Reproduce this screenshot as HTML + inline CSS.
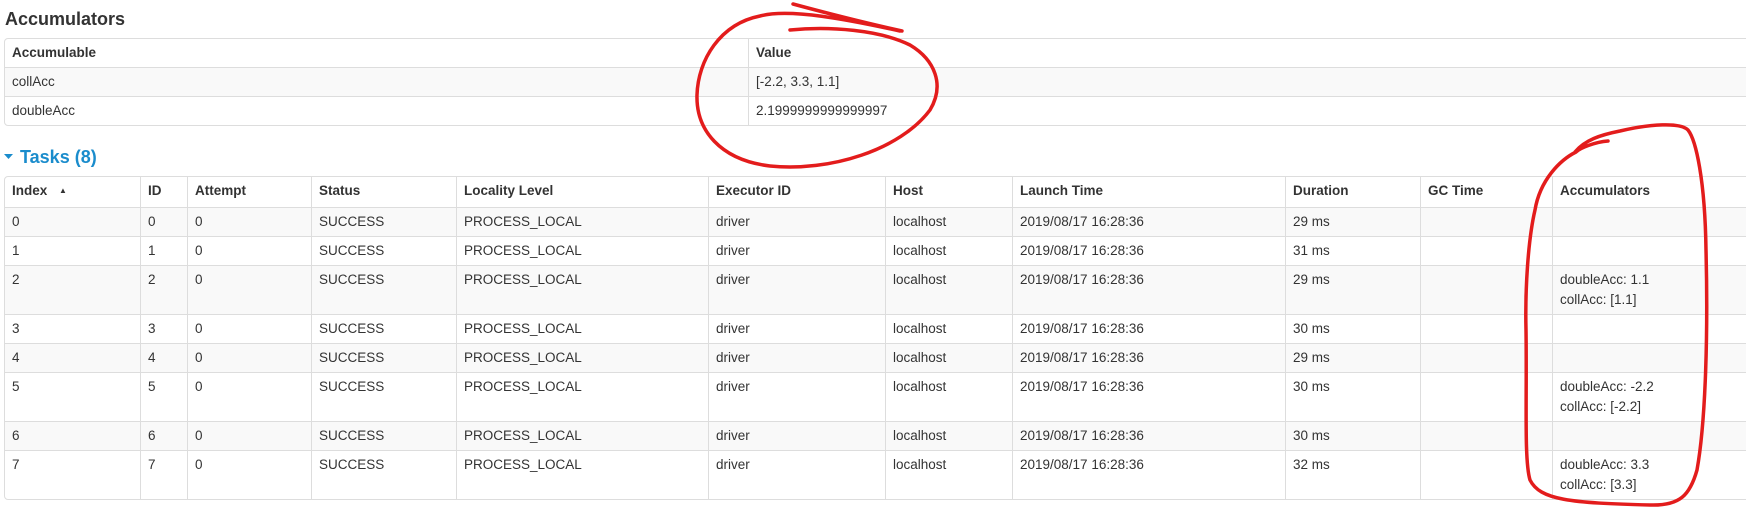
<!DOCTYPE html>
<html><head><meta charset="utf-8"><style>
body{margin:0;width:1746px;height:512px;overflow:hidden;background:#fff;font-family:"Liberation Sans",Arial,sans-serif;color:#333;position:relative}
h4{position:absolute;margin:0;font-size:18px;font-weight:bold;line-height:22px}
table{position:absolute;border-collapse:separate;border-spacing:0;table-layout:fixed;font-size:13.5px;border:1px solid #ddd;border-radius:4px}
td,th{padding:4px 7px 4px 7px;line-height:20px;text-align:left;vertical-align:top;border-left:1px solid #ddd;border-top:1px solid #ddd;white-space:nowrap;overflow:hidden}
th{font-weight:bold;border-top:none}
td:first-child,th:first-child{border-left:none}
tr.g td{background:#f9f9f9}
</style></head><body>
<h4 style="left:5px;top:8px;color:#333">Accumulators</h4>
<table style="left:4px;top:38px;width:1760px">
<colgroup><col style="width:743px"><col></colgroup>
<tr><th>Accumulable</th><th>Value</th></tr>
<tr class="g"><td>collAcc</td><td>[-2.2, 3.3, 1.1]</td></tr>
<tr><td>doubleAcc</td><td>2.1999999999999997</td></tr>
</table>
<h4 style="left:20px;top:146px;color:#1a8ccc">Tasks (8)</h4>
<svg style="position:absolute;left:4px;top:153px" width="10" height="8"><path d="M0 1 L9 1 L4.5 6 Z" fill="#1a8ccc"/></svg>
<table style="left:4px;top:176px;width:1760px">
<colgroup><col style="width:135px"><col style="width:47px"><col style="width:124px"><col style="width:145px"><col style="width:252px"><col style="width:177px"><col style="width:127px"><col style="width:273px"><col style="width:135px"><col style="width:132px"><col></colgroup>
<tr><th>Index <span style="font-size:8px;position:relative;top:-2px;margin-left:8px">▲</span></th><th>ID</th><th>Attempt</th><th>Status</th><th>Locality Level</th><th>Executor ID</th><th>Host</th><th>Launch Time</th><th>Duration</th><th>GC Time</th><th>Accumulators</th></tr>
<tr class="g"><td>0</td><td>0</td><td>0</td><td>SUCCESS</td><td>PROCESS_LOCAL</td><td>driver</td><td>localhost</td><td>2019/08/17 16:28:36</td><td>29 ms</td><td></td><td></td></tr>
<tr><td>1</td><td>1</td><td>0</td><td>SUCCESS</td><td>PROCESS_LOCAL</td><td>driver</td><td>localhost</td><td>2019/08/17 16:28:36</td><td>31 ms</td><td></td><td></td></tr>
<tr class="g"><td>2</td><td>2</td><td>0</td><td>SUCCESS</td><td>PROCESS_LOCAL</td><td>driver</td><td>localhost</td><td>2019/08/17 16:28:36</td><td>29 ms</td><td></td><td>doubleAcc: 1.1<br>collAcc: [1.1]</td></tr>
<tr><td>3</td><td>3</td><td>0</td><td>SUCCESS</td><td>PROCESS_LOCAL</td><td>driver</td><td>localhost</td><td>2019/08/17 16:28:36</td><td>30 ms</td><td></td><td></td></tr>
<tr class="g"><td>4</td><td>4</td><td>0</td><td>SUCCESS</td><td>PROCESS_LOCAL</td><td>driver</td><td>localhost</td><td>2019/08/17 16:28:36</td><td>29 ms</td><td></td><td></td></tr>
<tr><td>5</td><td>5</td><td>0</td><td>SUCCESS</td><td>PROCESS_LOCAL</td><td>driver</td><td>localhost</td><td>2019/08/17 16:28:36</td><td>30 ms</td><td></td><td>doubleAcc: -2.2<br>collAcc: [-2.2]</td></tr>
<tr class="g"><td>6</td><td>6</td><td>0</td><td>SUCCESS</td><td>PROCESS_LOCAL</td><td>driver</td><td>localhost</td><td>2019/08/17 16:28:36</td><td>30 ms</td><td></td><td></td></tr>
<tr><td>7</td><td>7</td><td>0</td><td>SUCCESS</td><td>PROCESS_LOCAL</td><td>driver</td><td>localhost</td><td>2019/08/17 16:28:36</td><td>32 ms</td><td></td><td>doubleAcc: 3.3<br>collAcc: [3.3]</td></tr>
</table>
<svg style="position:absolute;left:0;top:0" width="1746" height="512" fill="none" stroke="#e31c1c" stroke-width="3.5" stroke-linecap="round">
<path d="M793 4 C830 14 870 24 902 31 M900 31 C850 20 790 8 760 16 C720 24 698 60 697 95 C696 130 720 160 770 166 C830 172 900 150 930 110 C945 85 935 60 910 45 C880 30 830 26 790 30"/>
<path d="M1608 141 C1595 142 1580 148 1576 152 C1560 160 1540 180 1535 210 C1528 240 1525 290 1526 330 C1527 400 1524 460 1530 480 C1540 500 1570 503 1650 505 C1680 506 1690 495 1697 470 C1706 420 1708 330 1706 250 C1705 180 1696 140 1688 130 C1680 122 1650 124 1620 131 C1600 135 1585 140 1575 152"/>
</svg>
</body></html>
